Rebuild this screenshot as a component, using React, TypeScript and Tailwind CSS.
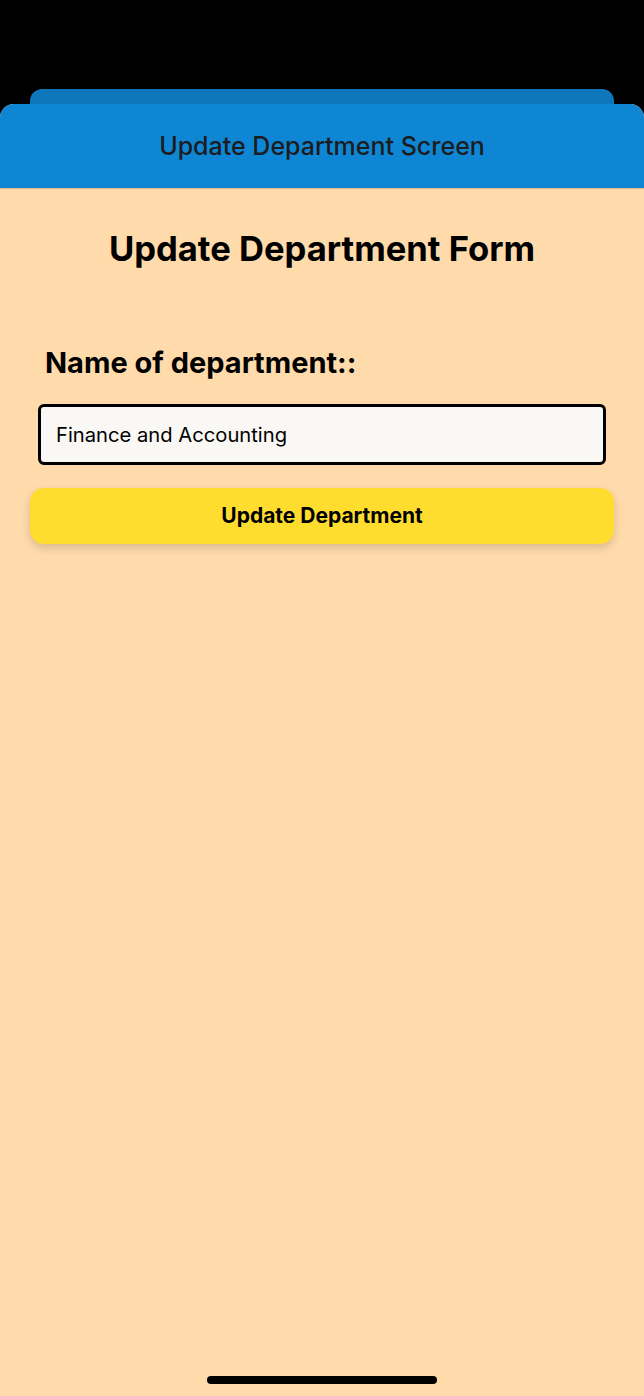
import { useState } from 'react'

export default function App() {
  const [name, setName] = useState('Finance and Accounting')

  return (
    <div className="relative flex h-[1396px] w-[644px] flex-col overflow-hidden bg-black font-['Inter','Noto_Sans',sans-serif]">
      {/* back sheet */}
      <div className="mx-[30px] mt-[89px] h-[15px] shrink-0 rounded-t-[12px] bg-[#0e77bb]"></div>

      {/* front sheet */}
      <div className="flex flex-1 flex-col overflow-hidden rounded-t-[14px] bg-[#ffdaab]">
        {/* header */}
        <div className="flex h-[85px] shrink-0 items-center justify-center border-b border-[#e0b98d] bg-[#0f86d3]">
          <h1 className="pt-[1px] text-[25px] font-medium text-[#1c1c1e]">Update Department Screen</h1>
        </div>

        {/* form */}
        <div className="flex flex-col px-[30px]">
          <h2 className="mt-[38px] text-center text-[34.6px] leading-[42px] font-bold text-black">
            Update Department Form
          </h2>
          <label className="mt-[76px] pl-[15px] text-[29px] leading-[36px] font-bold text-black">
            Name of department::
          </label>
          <div className="mt-[23px] px-[8px]">
            <input
              autoFocus
              value={name}
              onChange={(e) => setName(e.target.value)}
              className="h-[61px] w-full rounded-[6px] border-[3px] border-black bg-[#faf8f5] px-[15px] text-[20.2px] text-black caret-[#5b7cf5] outline-none"
            />
          </div>
          <button className="mt-[23px] h-[56px] w-full rounded-[14px] bg-[#ffdd2e] text-[21px] font-bold text-black shadow-[0_4px_10px_rgba(0,0,0,0.15)]">
            Update Department
          </button>
        </div>

        <div className="flex-1"></div>

        {/* home indicator */}
        <div className="mb-[12px] flex justify-center">
          <div className="h-[8px] w-[230px] rounded-full bg-black"></div>
        </div>
      </div>
    </div>
  )
}
